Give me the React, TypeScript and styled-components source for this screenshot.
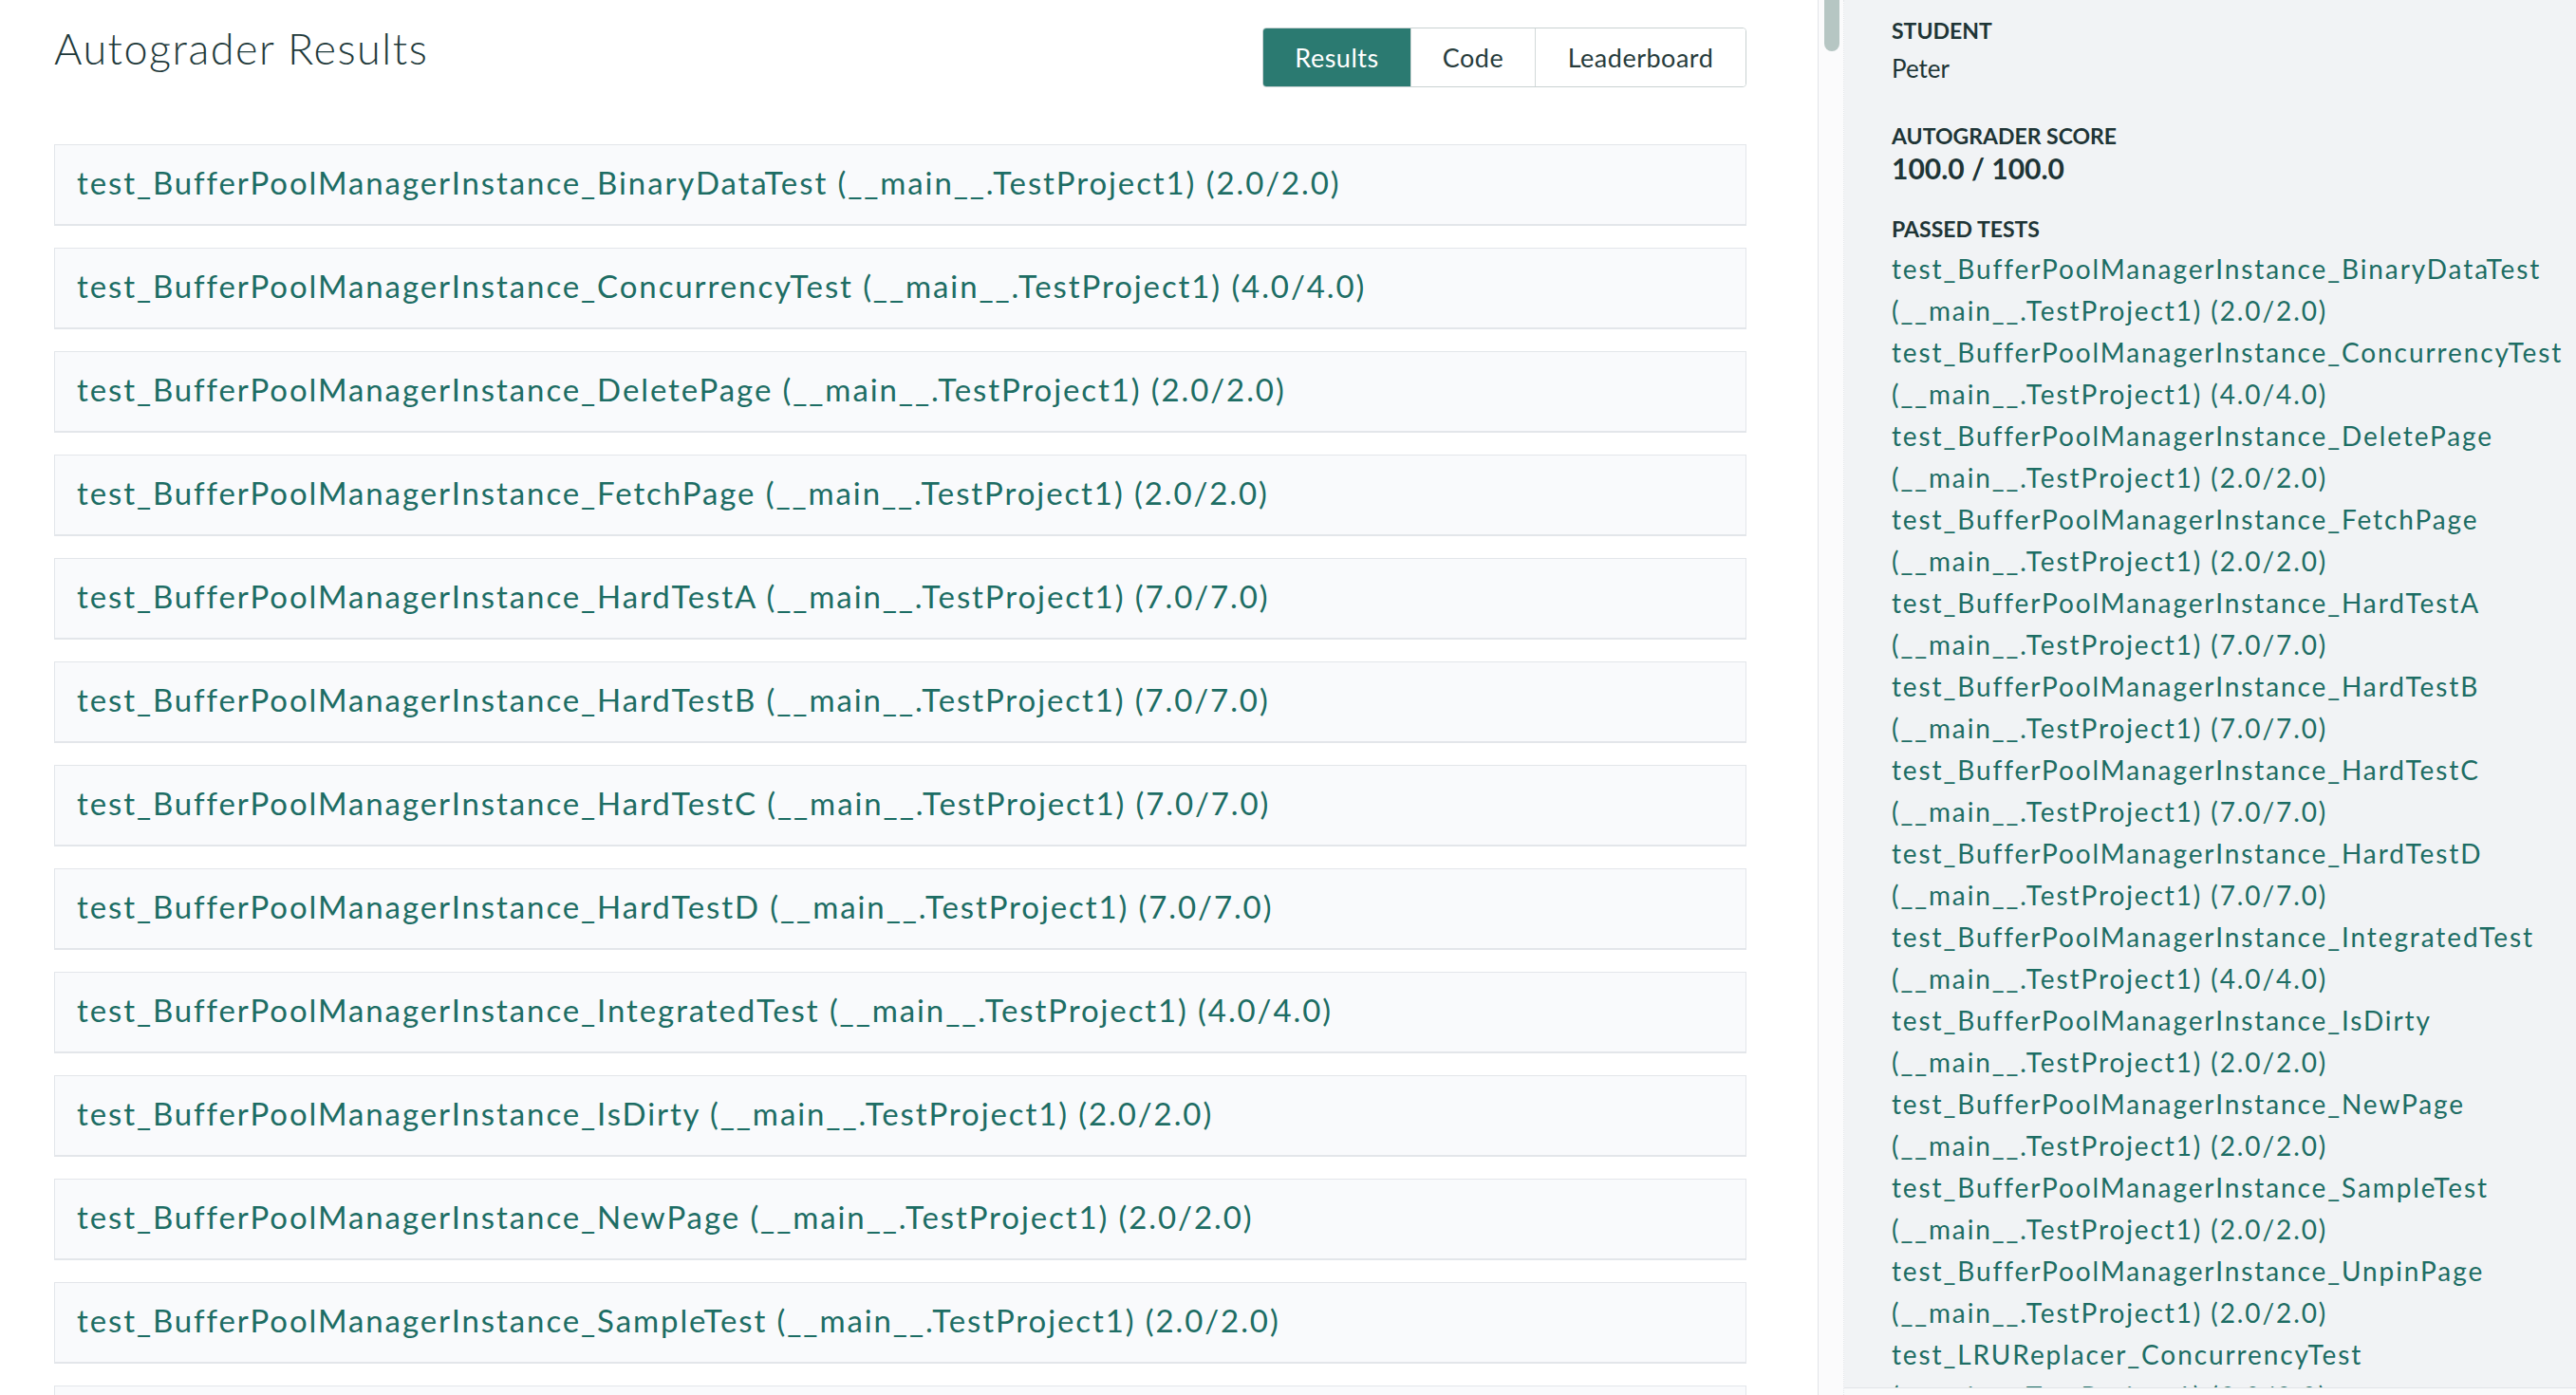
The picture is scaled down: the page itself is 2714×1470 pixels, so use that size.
import React from "react";
import styled, { createGlobalStyle } from "styled-components";

const GlobalStyle = createGlobalStyle`
    html, body {
        margin: 0;
        padding: 0;
        overflow: hidden;
        background: #ffffff;
        font-family: Lato, "Open Sans", "Liberation Sans", sans-serif;
    }
`;

const Layout = styled.div`
    display: flex;
    height: 100vh;
    width: 100vw;
`;

const Main = styled.main`
    flex: 1;
    min-width: 0;
    padding: 29px 75px 0 57px;
    overflow: hidden;
`;

const Header = styled.div`
    display: flex;
    justify-content: space-between;
    align-items: flex-start;
    margin-bottom: 60px;
`;

const Title = styled.h1`
    margin: 0;
    font-size: 45px;
    line-height: 44px;
    font-weight: 300;
    letter-spacing: 1.5px;
    color: #1f3a3b;
`;

const Tabs = styled.div`
    display: flex;
    height: 63px;
    border: 1px solid #c9d2d2;
    border-radius: 4px;
    overflow: hidden;
    box-sizing: border-box;
`;

const Tab = styled.button<{ $active?: boolean; $width: number }>`
    display: flex;
    align-items: center;
    justify-content: center;
    width: ${(p) => p.$width}px;
    padding: 0;
    border: none;
    border-left: 1px solid #d3dada;
    font-family: inherit;
    font-size: 27px;
    letter-spacing: 0.5px;
    color: ${(p) => (p.$active ? "#ffffff" : "#273c3c")};
    background: ${(p) => (p.$active ? "#2b7a71" : "#ffffff")};
    &:first-child {
        border-left: none;
    }
`;

const Cards = styled.div`
    display: flex;
    flex-direction: column;
    gap: 23px;
`;

const Card = styled.div`
    display: flex;
    align-items: center;
    height: 86px;
    flex-shrink: 0;
    box-sizing: border-box;
    padding: 0 23px 5px;
    background: #f9fafc;
    border: 1px solid #e3e6ea;
    border-bottom-width: 2px;
    font-size: 33px;
    letter-spacing: 1.9px;
    color: #1d6d64;
    white-space: nowrap;
`;

const Divider = styled.div`
    position: relative;
    width: 28px;
    flex-shrink: 0;
    box-sizing: border-box;
    background: #fbfbfc;
    border-left: 1px solid #e2e5e8;
    border-right: 1px dotted #e3e6e9;
`;

const Thumb = styled.div`
    position: absolute;
    top: 0;
    left: 6px;
    width: 16px;
    height: 54px;
    border-radius: 0 0 8px 8px;
    background: #b6c6c3;
`;

const Sidebar = styled.aside`
    display: flex;
    flex-direction: column;
    width: 771px;
    flex-shrink: 0;
    height: 100vh;
    background: #f1f3f5;
`;

const SidebarBody = styled.div`
    height: 1462px;
    flex-shrink: 0;
    overflow: hidden;
    padding: 19px 0 0 50px;
    box-sizing: border-box;
`;

const SidebarFooter = styled.div`
    flex: 1;
    background: #f9fafb;
    border-top: 1px solid #e1e4e8;
`;

const Label = styled.div<{ $gap: number }>`
    font-size: 23px;
    line-height: 1.2;
    font-weight: 700;
    color: #1e3536;
    margin-bottom: ${(p) => p.$gap}px;
`;

const Value = styled.div<{ $bold?: boolean; $after: number }>`
    font-size: ${(p) => (p.$bold ? 30 : 26)}px;
    line-height: 1.2;
    font-weight: ${(p) => (p.$bold ? 700 : 400)};
    color: #1e3536;
    margin-bottom: ${(p) => p.$after}px;
`;

const PassedList = styled.div`
    display: flex;
    flex-direction: column;
`;

const PassedLink = styled.a`
    display: block;
    font-size: 28px;
    line-height: 44px;
    letter-spacing: 1.9px;
    color: #1d6d64;
    text-decoration: none;
    white-space: nowrap;
`;

const Line = styled.span`
    display: block;
`;

const tests: [string, string][] = [
    ["test_BufferPoolManagerInstance_BinaryDataTest", "2.0/2.0"],
    ["test_BufferPoolManagerInstance_ConcurrencyTest", "4.0/4.0"],
    ["test_BufferPoolManagerInstance_DeletePage", "2.0/2.0"],
    ["test_BufferPoolManagerInstance_FetchPage", "2.0/2.0"],
    ["test_BufferPoolManagerInstance_HardTestA", "7.0/7.0"],
    ["test_BufferPoolManagerInstance_HardTestB", "7.0/7.0"],
    ["test_BufferPoolManagerInstance_HardTestC", "7.0/7.0"],
    ["test_BufferPoolManagerInstance_HardTestD", "7.0/7.0"],
    ["test_BufferPoolManagerInstance_IntegratedTest", "4.0/4.0"],
    ["test_BufferPoolManagerInstance_IsDirty", "2.0/2.0"],
    ["test_BufferPoolManagerInstance_NewPage", "2.0/2.0"],
    ["test_BufferPoolManagerInstance_SampleTest", "2.0/2.0"],
    ["test_BufferPoolManagerInstance_UnpinPage", "2.0/2.0"],
    ["test_LRUReplacer_ConcurrencyTest", "2.0/2.0"],
];

const tabs = [
    { label: "Results", width: 155, active: true },
    { label: "Code", width: 131 },
    { label: "Leaderboard", width: 222 },
];

export default function App() {
    return (
        <>
            <GlobalStyle />
            <Layout>
                <Main>
                    <Header>
                        <Title>Autograder Results</Title>
                        <Tabs>
                            {tabs.map((t) => (
                                <Tab key={t.label} $active={t.active} $width={t.width}>
                                    {t.label}
                                </Tab>
                            ))}
                        </Tabs>
                    </Header>
                    <Cards>
                        {tests.map(([name, score]) => (
                            <Card key={name}>
                                {name} (__main__.TestProject1) ({score})
                            </Card>
                        ))}
                    </Cards>
                </Main>
                <Divider>
                    <Thumb />
                </Divider>
                <Sidebar>
                    <SidebarBody>
                        <Label $gap={10}>STUDENT</Label>
                        <Value $after={42}>Peter</Value>
                        <Label $gap={2}>AUTOGRADER SCORE</Label>
                        <Value $bold $after={33}>100.0 / 100.0</Value>
                        <Label $gap={5}>PASSED TESTS</Label>
                        <PassedList>
                            {tests.map(([name, score]) => (
                                <PassedLink key={name} href="#">
                                    <Line>{name}</Line>
                                    <Line>(__main__.TestProject1) ({score})</Line>
                                </PassedLink>
                            ))}
                        </PassedList>
                    </SidebarBody>
                    <SidebarFooter />
                </Sidebar>
            </Layout>
        </>
    );
}
